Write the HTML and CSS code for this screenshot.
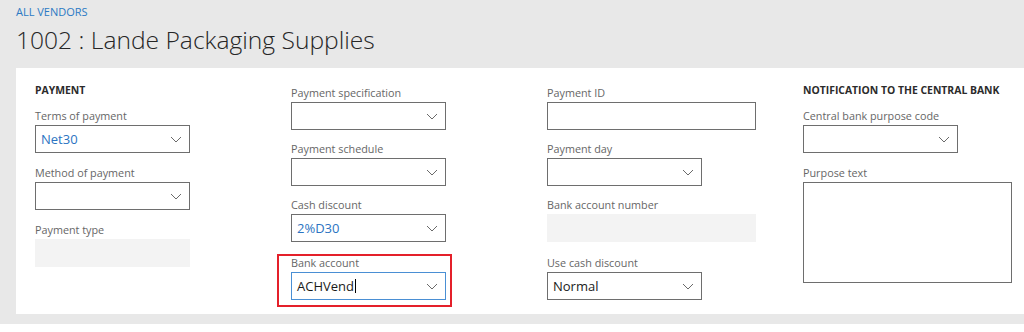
FILE: index.html
```html
<!DOCTYPE html>
<html lang="en">
	<head>
		<meta charset="UTF-8">
		<title>1002 : Lande Packaging Supplies</title>
		<link rel="stylesheet" href="styles.css">
	</head>
	<body>
		<div class="page">
			<div class="page-head">
				<a href="javascript:;" class="crumb">ALL VENDORS</a>
				<h1 class="title">1002 : Lande Packaging Supplies</h1>
			</div>
			<div class="card">
				<div class="col">
					<div class="group-title">PAYMENT</div>
					<div class="field">
						<label>Terms of payment</label>
						<div class="box select"><span class="val link">Net30</span><svg class="chev" viewBox="0 0 12 7"><path d="M1 1 L6 6 L11 1"/></svg></div>
					</div>
					<div class="field">
						<label>Method of payment</label>
						<div class="box select"><span class="val"></span><svg class="chev" viewBox="0 0 12 7"><path d="M1 1 L6 6 L11 1"/></svg></div>
					</div>
					<div class="field">
						<label>Payment type</label>
						<div class="box readonly"></div>
					</div>
				</div>
				<div class="col col-plain">
					<div class="field">
						<label>Payment specification</label>
						<div class="box select"><span class="val"></span><svg class="chev" viewBox="0 0 12 7"><path d="M1 1 L6 6 L11 1"/></svg></div>
					</div>
					<div class="field">
						<label>Payment schedule</label>
						<div class="box select"><span class="val"></span><svg class="chev" viewBox="0 0 12 7"><path d="M1 1 L6 6 L11 1"/></svg></div>
					</div>
					<div class="field before-last">
						<label>Cash discount</label>
						<div class="box select"><span class="val link">2%D30</span><svg class="chev" viewBox="0 0 12 7"><path d="M1 1 L6 6 L11 1"/></svg></div>
					</div>
					<div class="field marked">
						<label>Bank account</label>
						<div class="box select focus"><span class="val">ACHVend<i class="caret"></i></span><svg class="chev" viewBox="0 0 12 7"><path d="M1 1 L6 6 L11 1"/></svg></div>
					</div>
				</div>
				<div class="col col-plain">
					<div class="field">
						<label>Payment ID</label>
						<div class="box wide"></div>
					</div>
					<div class="field">
						<label>Payment day</label>
						<div class="box select"><span class="val"></span><svg class="chev" viewBox="0 0 12 7"><path d="M1 1 L6 6 L11 1"/></svg></div>
					</div>
					<div class="field before-last">
						<label>Bank account number</label>
						<div class="box readonly wide"></div>
					</div>
					<div class="field">
						<label>Use cash discount</label>
						<div class="box select"><span class="val">Normal</span><svg class="chev" viewBox="0 0 12 7"><path d="M1 1 L6 6 L11 1"/></svg></div>
					</div>
				</div>
				<div class="col">
					<div class="group-title">NOTIFICATION TO THE CENTRAL BANK</div>
					<div class="field">
						<label>Central bank purpose code</label>
						<div class="box select"><span class="val"></span><svg class="chev" viewBox="0 0 12 7"><path d="M1 1 L6 6 L11 1"/></svg></div>
					</div>
					<div class="field">
						<label>Purpose text</label>
						<div class="box memo"></div>
					</div>
				</div>
			</div>
		</div>
	</body>
</html>
```

FILE: styles.css
```css
html,
body {
	margin: 0;
	background: #fff;
}

body {
	font-family: "Open Sans", "Noto Sans", sans-serif;
	color: #333;
}

.page {
	background: #e8e8e8;
	height: 324px;
	overflow: hidden;
}

.page-head {
	padding: 4px 16px 0;
	height: 64px;
	box-sizing: border-box;
}

.crumb {
	display: block;
	color: #2b7ac4;
	font-size: 11px;
	line-height: 16px;
	text-decoration: none;
}

.title {
	margin: 4px 0 0;
	font-size: 24.6px;
	font-weight: 300;
	line-height: 32px;
	color: #262626;
}

.card {
	margin-left: 16px;
	margin-top: 4px;
	height: 246px;
	background: #fff;
	box-sizing: border-box;
	padding: 14px 0 0 19px;
	display: grid;
	grid-template-columns: repeat(4, 256px);
	overflow: hidden;
}

.col-plain {
	padding-top: 3px;
}

.group-title {
	font-size: 10.4px;
	font-weight: 700;
	line-height: 16px;
	color: #2b2b2b;
	margin-bottom: 10px;
}

.field {
	margin-bottom: 12px;
}

.col-plain .field {
	margin-bottom: 11px;
}

.col-plain .field.before-last {
	margin-bottom: 13px;
}

.field label {
	display: block;
	font-size: 10.8px;
	line-height: 16px;
	color: #666;
	margin-bottom: 1px;
}

.box {
	width: 155px;
	height: 28px;
	box-sizing: border-box;
	border: 1px solid #6e6e6e;
	background: #fff;
}

.box.wide {
	width: 209px;
}

.box.readonly {
	border: none;
	background: #f3f3f3;
}

.box.memo {
	width: 209px;
	height: 101px;
}

.select {
	display: flex;
	align-items: center;
	justify-content: space-between;
	padding: 0 6px 0 5px;
}

.select.focus {
	border-color: #4a8fd4;
}

.val {
	font-size: 13px;
	color: #1a1a1a;
	display: flex;
	align-items: center;
}

.val.link {
	color: #2b74c2;
}

.caret {
	display: inline-block;
	width: 1px;
	height: 14px;
	background: #000;
	margin-left: 1px;
}

.chev {
	width: 12px;
	height: 7px;
	margin-right: 1px;
	fill: none;
	stroke: #6a6a6a;
	stroke-width: 1;
}

.marked {
	position: relative;
}

.marked::after {
	content: "";
	position: absolute;
	top: -1px;
	left: -14px;
	right: 95px;
	bottom: -7px;
	border: 2px solid #e4202a;
}
```
